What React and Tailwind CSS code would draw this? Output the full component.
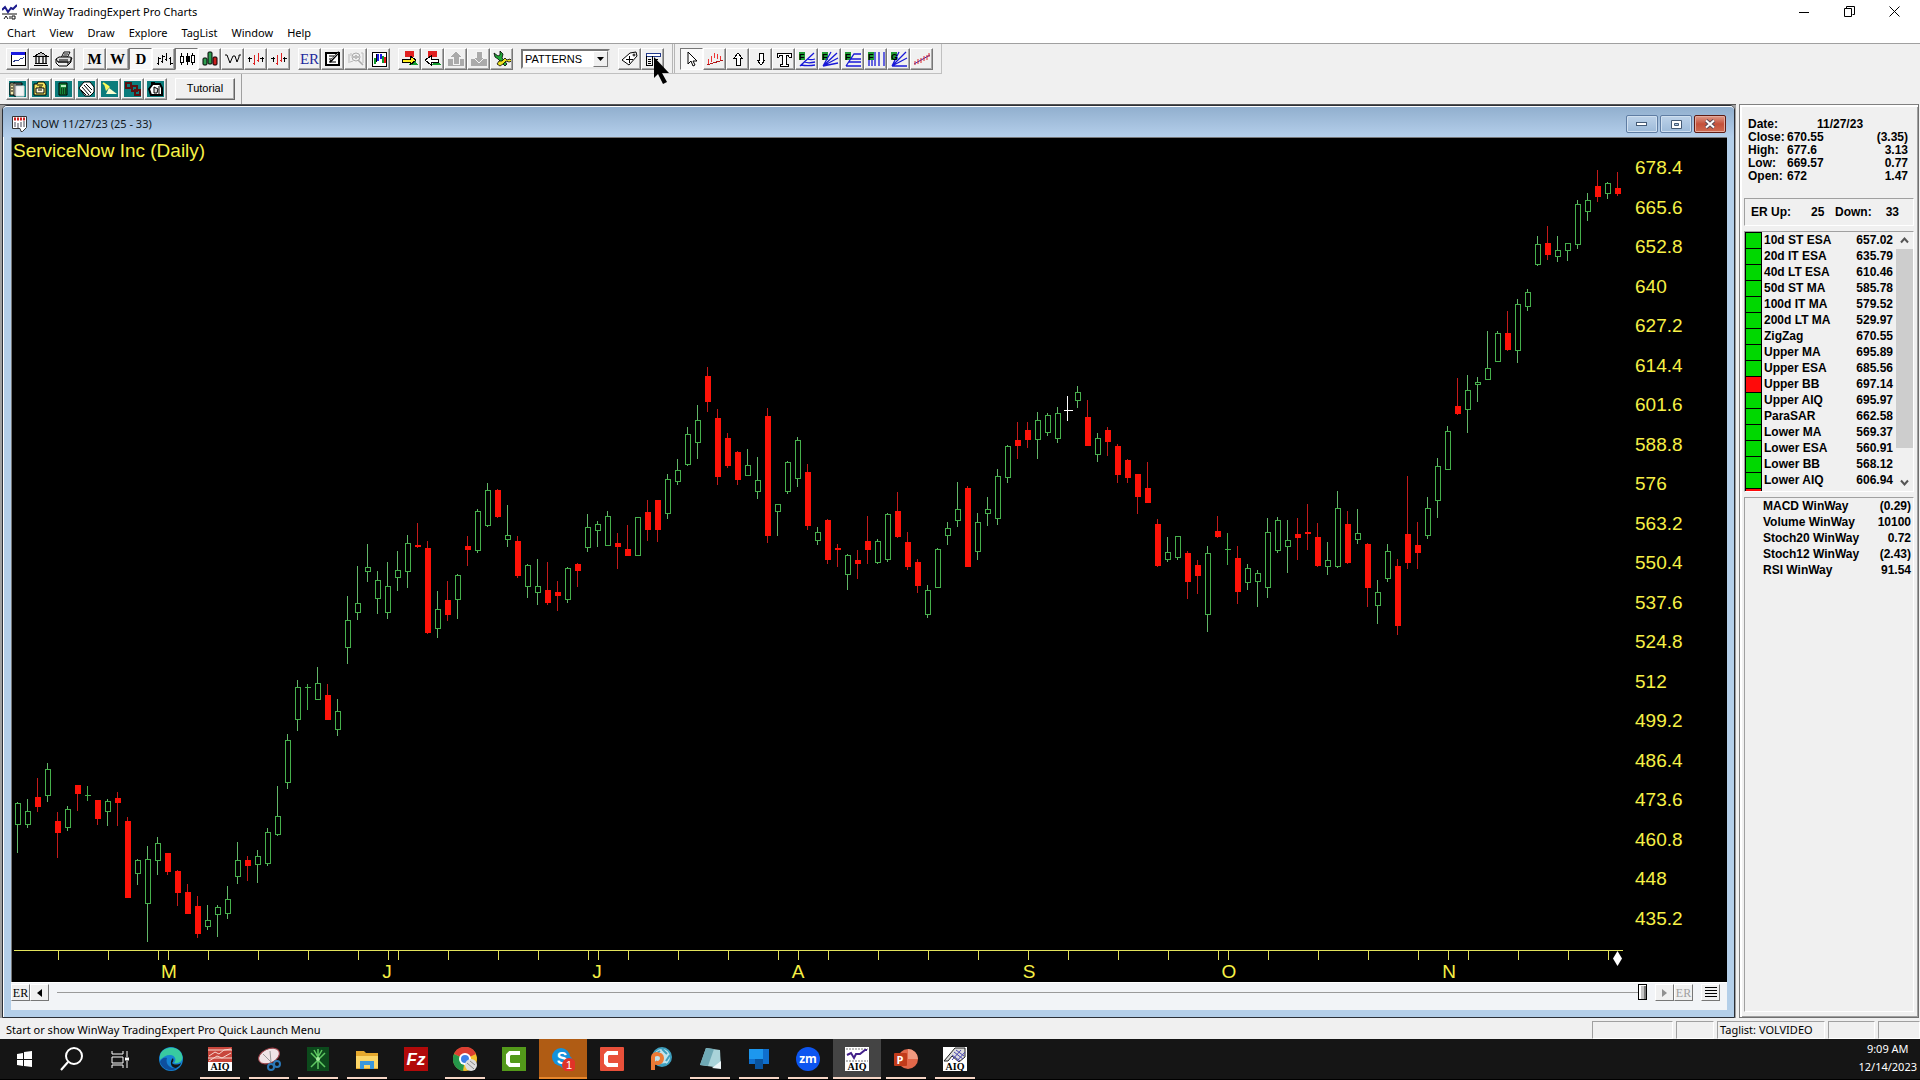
import React from 'react';

const MENU_ITEMS = ['Chart', 'View', 'Draw', 'Explore', 'TagList', 'Window', 'Help'];

const UI_FONT = "font-['Noto_Sans','Open_Sans',sans-serif]";
const SANS_FONT = "font-['Liberation_Sans',Arial,sans-serif]";

// [up?, high, body top, body bottom, low]
const CANDLES = [
    [1, 802, 803, 824, 853], [1, 799, 811, 824, 828], [0, 778, 797, 806, 812], [1, 763, 769, 795, 802],
    [0, 812, 821, 832, 858], [1, 806, 809, 827, 831], [0, 785, 785, 793, 811], [1, 786, 795, 795, 801],
    [0, 800, 800, 818, 825], [1, 799, 801, 811, 826], [0, 792, 798, 802, 826], [0, 817, 821, 897, 897],
    [1, 859, 860, 873, 885], [1, 846, 859, 903, 942], [1, 837, 843, 860, 875], [0, 853, 853, 871, 875],
    [0, 870, 871, 892, 906], [0, 884, 892, 913, 914], [0, 896, 906, 933, 938], [1, 905, 920, 926, 930],
    [1, 905, 907, 914, 937], [1, 886, 899, 913, 919], [1, 842, 860, 876, 884], [0, 856, 860, 865, 881],
    [1, 850, 856, 864, 883], [1, 828, 832, 863, 866], [1, 786, 816, 834, 836], [1, 734, 740, 782, 789],
    [1, 680, 687, 719, 731], [1, 684, 687, 687, 710], [1, 667, 683, 699, 699], [0, 684, 695, 719, 719],
    [1, 699, 711, 729, 736], [1, 596, 620, 647, 664], [1, 566, 603, 612, 620], [1, 544, 567, 571, 582],
    [1, 571, 580, 598, 614], [1, 562, 586, 612, 619], [1, 551, 570, 577, 591], [1, 535, 543, 571, 588],
    [0, 523, 545, 546, 548], [0, 541, 548, 632, 634], [1, 591, 609, 628, 638], [0, 581, 600, 614, 621],
    [1, 574, 575, 599, 619], [0, 536, 546, 549, 566], [1, 509, 511, 550, 553], [1, 483, 490, 525, 527],
    [0, 489, 490, 516, 518], [1, 505, 535, 539, 547], [0, 536, 541, 575, 578], [1, 564, 565, 586, 598],
    [1, 559, 586, 592, 605], [0, 562, 590, 602, 605], [0, 581, 592, 595, 611], [1, 567, 568, 599, 603],
    [0, 563, 564, 570, 587], [1, 514, 527, 547, 552], [1, 521, 524, 530, 547], [1, 511, 516, 545, 545],
    [0, 533, 543, 546, 569], [0, 525, 549, 555, 556], [1, 517, 517, 555, 555], [0, 500, 512, 529, 541],
    [0, 500, 500, 529, 542], [1, 474, 479, 513, 519], [1, 459, 470, 481, 485], [1, 427, 434, 464, 466],
    [1, 405, 420, 442, 459], [0, 367, 376, 401, 412], [0, 409, 418, 476, 485], [0, 433, 438, 465, 468],
    [0, 451, 452, 479, 485], [1, 449, 465, 475, 475], [1, 457, 480, 491, 499], [0, 408, 416, 535, 543],
    [1, 504, 504, 511, 536], [1, 461, 462, 491, 494], [1, 437, 440, 478, 487], [0, 464, 472, 525, 530],
    [1, 527, 532, 540, 545], [0, 519, 520, 559, 564], [0, 544, 548, 549, 567], [1, 554, 555, 574, 590],
    [0, 550, 560, 563, 579], [0, 516, 541, 549, 564], [1, 539, 541, 562, 564], [1, 513, 514, 559, 562],
    [0, 492, 511, 536, 538], [0, 532, 542, 566, 570], [0, 559, 562, 585, 593], [1, 585, 590, 614, 618],
    [1, 548, 549, 587, 587], [1, 522, 528, 535, 545], [1, 482, 509, 520, 527], [0, 486, 488, 566, 567],
    [1, 513, 522, 551, 560], [1, 497, 509, 513, 526], [1, 469, 476, 518, 525], [1, 445, 446, 477, 483],
    [0, 422, 440, 445, 459], [0, 422, 430, 439, 448], [1, 412, 420, 439, 459], [1, 413, 415, 432, 436],
    [1, 407, 413, 438, 443], null, [1, 386, 392, 400, 408], [0, 400, 417, 445, 446],
    [1, 433, 438, 454, 462], [0, 427, 430, 441, 456], [0, 444, 446, 474, 483], [0, 459, 460, 477, 483],
    [0, 474, 474, 496, 514], [0, 462, 488, 502, 503], [0, 519, 524, 565, 567], [1, 537, 552, 559, 562],
    [1, 536, 536, 557, 560], [0, 551, 553, 581, 599], [0, 560, 565, 575, 594], [1, 546, 553, 614, 632],
    [0, 516, 531, 536, 538], [1, 533, 549, 549, 565], [0, 546, 558, 591, 604], [1, 564, 568, 582, 590],
    [1, 570, 573, 581, 607], [1, 518, 532, 587, 598], [1, 517, 520, 550, 553], [1, 520, 540, 546, 573],
    [0, 518, 534, 537, 560], [0, 504, 532, 533, 550], [0, 523, 537, 565, 567], [1, 542, 560, 566, 575],
    [1, 491, 508, 566, 568], [0, 511, 524, 562, 564], [1, 509, 533, 539, 544], [0, 543, 544, 587, 607],
    [1, 580, 592, 605, 624], [1, 544, 551, 578, 582], [0, 559, 566, 625, 635], [0, 476, 534, 562, 569],
    [0, 522, 545, 552, 569], [1, 497, 508, 535, 539], [1, 458, 466, 500, 518], [1, 426, 431, 469, 470],
    [0, 378, 406, 413, 415], [1, 375, 390, 409, 433], [1, 377, 382, 384, 402], [1, 331, 368, 379, 379],
    [1, 331, 333, 361, 361], [0, 311, 333, 349, 351], [1, 299, 304, 350, 363], [1, 289, 292, 306, 311],
    [1, 236, 244, 264, 266], [0, 226, 243, 254, 260], [1, 236, 250, 256, 262], [1, 243, 243, 250, 261],
    [1, 200, 204, 244, 249], [1, 193, 200, 211, 221], [0, 170, 186, 196, 202], [1, 182, 183, 193, 199],
    [0, 172, 188, 193, 196],
];

const PRICE_LABELS = [
    '678.4', '665.6', '652.8', '640', '627.2', '614.4', '601.6', '588.8', '576', '563.2',
    '550.4', '537.6', '524.8', '512', '499.2', '486.4', '473.6', '460.8', '448', '435.2',
];

const WEEK_TICKS = [
    58, 108, 158, 168, 208, 258, 308, 358, 388, 398, 448, 498, 538, 588, 598, 628, 678, 728, 778, 798,
    828, 878, 928, 978, 1028, 1068, 1118, 1168, 1218, 1228, 1268, 1318, 1368, 1418, 1448, 1468, 1518, 1568, 1608,
];

const MONTHS = [['M', 169], ['J', 387], ['J', 597], ['A', 798], ['S', 1029], ['O', 1229], ['N', 1449]];

const QUOTES = [
    ['Close:', '670.55', '(3.35)'],
    ['High:', '677.6', '3.13'],
    ['Low:', '669.57', '0.77'],
    ['Open:', '672', '1.47'],
];

const INDICATORS = [
    ['10d ST ESA', '657.02'], ['20d IT ESA', '635.79'], ['40d LT ESA', '610.46'], ['50d ST MA', '585.78'],
    ['100d IT MA', '579.52'], ['200d LT MA', '529.97'], ['ZigZag', '670.55'], ['Upper MA', '695.89'],
    ['Upper ESA', '685.56'], ['Upper BB', '697.14', true], ['Upper AIQ', '695.97'], ['ParaSAR', '662.58'],
    ['Lower MA', '569.37'], ['Lower ESA', '560.91'], ['Lower BB', '568.12'], ['Lower AIQ', '606.94'],
    ['St Max', '710.44', true],
];

const WINWAY = [
    ['MACD WinWay', '(0.29)'],
    ['Volume WinWay', '10100'],
    ['Stoch20 WinWay', '0.72'],
    ['Stoch12 WinWay', '(2.43)'],
    ['RSI WinWay', '91.54'],
];

const Icon = ({ children, crisp = true }) => (
    <svg width="18" height="16" viewBox="0 0 18 16" fill="none" stroke="#000" shapeRendering={crisp ? 'crispEdges' : 'auto'}>
        {children}
    </svg>
);

const ToolButton = ({ label, pressed, children }) => (
    <button
        aria-label={label}
        className={`flex h-[22px] w-[23px] items-center justify-center border ${
            pressed
                ? 'border-t-[#777] border-l-[#777] border-r-white border-b-white bg-[#f9f9f9] pt-px pl-px'
                : 'border-t-white border-l-white border-r-[#777] border-b-[#777] bg-[#f0f0f0] shadow-[inset_-1px_-1px_0_#a9a9a9]'
        }`}
    >
        {children}
    </button>
);

const Serif = ({ children }) => (
    <span className="font-['Liberation_Serif',serif] text-[15px] leading-4 font-bold text-black">{children}</span>
);

/* Toolbar glyphs */
const ChartIcon = () => (
    <Icon>
        <rect x="2" y="1" width="14" height="13" fill="#fff" />
        <path d="M2 2.5h14" stroke="#1a1ae0" strokeWidth="3" />
        <path d="M4 11l3-2 2 1 3-3 1 1 2-2" stroke="#2a3a8a" />
    </Icon>
);

const BankIcon = () => (
    <Icon>
        <path d="M2 5.500L9 1.500l7 4zM2 14.500h14M3 12.500h12" fill="#bbb" />
        <path d="M4 6v6M7 6v6M11 6v6M14 6v6" stroke="#555" strokeWidth="2" />
    </Icon>
);

const PrinterIcon = () => (
    <Icon crisp={false}>
        <path d="M6 7l3-6h6l-3 6" fill="#fff" />
        <path d="M1 8l3-2h11l2 1-2 4H3z" fill="#ddd" />
        <path d="M1 8v4l3 3h8l4-4V7M3 11h10v3M4 9h9" />
        <path d="M9 3h4M8 5h4" />
    </Icon>
);

const BarsIcon = () => (
    <Icon>
        <path d="M3.500 6v8M1.500 12.500h2M3.500 7.500h2M7.500 4v8M5.500 10.500h2M7.500 5.500h2M11.500 2v8M9.500 8.500h2M15.500 6v8M13.500 7.500h2M15.500 12.500h2" />
    </Icon>
);

const CandlesIcon = () => (
    <Icon>
        <path d="M3.500 2v12M9.500 2v12M14.500 2v12" />
        <rect x="2" y="5" width="3" height="6" fill="#fff" />
        <rect x="8" y="5" width="3" height="5" fill="#000" />
        <rect x="13" y="4" width="3" height="7" fill="#fff" />
    </Icon>
);

const VolumeIcon = () => (
    <Icon crisp={false}>
        <rect x="2" y="7" width="4" height="7" rx="1" fill="#2e9d50" />
        <rect x="7" y="1" width="4" height="12" rx="1" fill="#2e9d50" />
        <rect x="12" y="6" width="4" height="8" rx="1" fill="#c81e1e" />
    </Icon>
);

const LineIcon = () => (
    <Icon crisp={false}>
        <path d="M1 4h2l3 8 3-7 2 0 2 6 2-5v-2h2" />
    </Icon>
);

const SpreadIcon = ({ inward }) => (
    <Icon>
        <path d="M7.500 4v10M5.500 12.500h2M11.500 2v9M9.500 9.500h2" stroke="#d22" />
        {inward ? (
            <path d="M1 7.500h4M13 7.500h4M3.500 5.500v5M14.500 5.500v5" />
        ) : (
            <path d="M1 7.500h4M13 7.500h4M2.500 5.500v5M15.500 5.500v5" />
        )}
    </Icon>
);

const NoteIcon = () => (
    <Icon crisp={false}>
        <rect x="2" y="2" width="13" height="12" fill="#fff" strokeWidth="2" />
        <path d="M5 5h5M5 8h3M5 11h7" />
        <path d="M6 11L15 1" strokeWidth="2" />
        <path d="M7 9L14 2" stroke="#fff" strokeWidth="0.6" />
    </Icon>
);

const ZoomIcon = () => (
    <Icon crisp={false}>
        <path d="M2 3v9M4 2v3M3 11l3-1M14 2h2v10" stroke="#bbb" />
        <circle cx="9" cy="6" r="4" stroke="#aaa" />
        <path d="M7 7V5M9 8V4M11 7V5M11 9l5 5" stroke="#aaa" strokeWidth="1.500" />
    </Icon>
);

const ColorBarsIcon = () => (
    <Icon>
        <rect x="2" y="1" width="14" height="14" fill="#fff" />
        <path d="M4.500 7v6M12.500 5v7" stroke="#0a9a2a" strokeWidth="2" />
        <path d="M8 3v7M11 3v5" stroke="#1a1ae0" strokeWidth="2" />
        <path d="M6.500 3v8" strokeWidth="1" />
        <path d="M14.500 6v6" stroke="#e01515" strokeWidth="2" />
    </Icon>
);

const TagIcon = ({ back }) => (
    <Icon>
        <path d="M4 0h9v6H4z" fill="#e02020" stroke="none" />
        <path d="M13 8l4 6H8z" fill="#149a30" stroke="none" />
        {back ? (
            <path d="M1 9l6-4v3h7v3H7v3z" fill="#fff" />
        ) : (
            <path d="M15 9L9 5v3H1v3h8v3z" fill="#ffef20" />
        )}
    </Icon>
);

const GreyArrowIcon = ({ down }) => (
    <Icon>
        <path d="M1 8h16v7H1z" fill="#aaa" stroke="none" />
        {down ? (
            <path d="M6 0h6v6h3l-6 6-6-6h3z" fill="#aaa" stroke="#f4f4f4" />
        ) : (
            <path d="M9 0l6 6h-3v7H6V6H3z" fill="#aaa" stroke="#f4f4f4" />
        )}
    </Icon>
);

const WrenchIcon = () => (
    <Icon crisp={false}>
        <path d="M1 2l1 4 3 2 7 7 2-2-5-6 1-4-3-3v4L5 5z" fill="#20a838" strokeWidth="0.8" />
        <path d="M17 8l-3 1-2-2-3 3-3 0-2 3 3 2 3-2 3-3 3 1 3-1z" fill="#ece020" strokeWidth="0.8" />
    </Icon>
);

const LabelIcon = () => (
    <Icon crisp={false}>
        <path d="M1 9l8-7 6-1 1 4-8 9zM5 8.500h7M8.500 5v7" fill="#fff" />
        <circle cx="13" cy="4" r="1" />
    </Icon>
);

const QuickIcon = () => (
    <Icon>
        <rect x="2" y="2" width="14" height="3" fill="#fff" stroke="#223a8c" />
        <path d="M2.500 5v9h6V5M4 8h3M4 10h3M4 12h3" />
        <path d="M11 8h3" />
    </Icon>
);

const PointerIcon = () => (
    <Icon crisp={false}>
        <path d="M5 1v12l3-3 2 5 2-1-2-4h4z" fill="#fff" />
    </Icon>
);

const TrendIcon = () => (
    <Icon>
        <path d="M1 14L17 9" stroke="#b01515" />
        <path d="M2.500 8v5M5.500 5v6M8.500 2v5M11.500 3v5M14.500 5v4" stroke="#e33" />
    </Icon>
);

const ArrowIcon = ({ down }) => (
    <Icon>
        {down ? (
            <path d="M7 2h4v7h2l-4 5-4-5h2z" fill="#fff" />
        ) : (
            <path d="M7 14h4V7h2L9 2 5 7h2z" fill="#fff" />
        )}
    </Icon>
);

const TextIcon = () => (
    <Icon>
        <path d="M2 2h14v4h-2l-1-2h-2v9h2v2H5v-2h2V4H5L4 6H2z" fill="#fff" />
    </Icon>
);

const FanIcon = ({ letter, lines }) => (
    <Icon crisp={false}>
        <rect x="1" y="1" width="6" height="8" fill="#1f9a35" stroke="none" />
        <path d={lines} stroke="#1818d8" strokeWidth="1.300" />
        <text x="1" y="9" fill="#000" stroke="none" fontSize="9" fontWeight="bold" fontFamily="Liberation Sans, sans-serif">
            {letter}
        </text>
    </Icon>
);

const RegressionIcon = () => (
    <Icon crisp={false}>
        <path d="M1 13L17 4" stroke="#2020c8" />
        <path d="M2 14v-4M5 13V8M8 12V7M11 10V5M14 9V4M16 6V2" stroke="#e02828" />
    </Icon>
);

/* Second toolbar: teal tiles */
const Tile = ({ children }) => (
    <svg width="17" height="16" viewBox="0 0 17 16" stroke="#000" fill="none">
        <rect width="17" height="16" fill="#0b7c7c" stroke="none" />
        {children}
    </svg>
);

const TOOL_TILES = [
    ['Reports', <g key="a"><path d="M1 2h5v12H1z" fill="#f6ecb0" /><path d="M5 2h8v2H7v11H5z" fill="#fff" /><path d="M7 5h8v10H7z" fill="#f4f4f4" stroke="#ddd" /><path d="M2 4h2M2 7h2M2 10h2M6 3h7" /></g>],
    ['Data retrieval', <g key="b"><path d="M2 3h3l1-2h6l2 3v10H2z" fill="#f4e460" /><path d="M5 4h6M4 7h8v5H4z" fill="#fffbd8" /><path d="M6 9h4M7 6h3" /></g>],
    ['Calculator', <g key="c"><path d="M4 2h8v12H4z" fill="#18853a" /><path d="M6 5h5" stroke="#b5f0c0" strokeWidth="2" /><path d="M6 8h5M6 10h5M6 12h5" strokeDasharray="1 1" /></g>],
    ['Matching', <g key="d"><path d="M1 7l5-6h6l4 5v5l-4 4H7z" fill="#fff" /><path d="M4 6l7 8M6 4l7 8M8 3l6 6M3 9l5 5" /></g>],
    ['Alert', <g key="e"><path d="M3 3l6 3-4 4z" fill="#f5f060" stroke="none" /><path d="M8 7l8 6H5z" fill="#fbffd0" stroke="none" /><path d="M2 2l6 4" stroke="#ff5" strokeWidth="2" /></g>],
    ['Expert design', <g key="f"><path d="M2 2h5v5H2zM8 5h5v5H8zM11 9h5v5h-5z" stroke="#5a1010" strokeWidth="2" /></g>],
    ['Portfolio', <g key="g"><path d="M2 8l3-4V2h2v1h6l2 4v7H4z" fill="#fff" strokeWidth="2" /><path d="M7 6l4 2-1 4H7zM12 5v8" fill="#ddd" /></g>],
];

const WindowTitle = () => (
    <header className={`bg-white text-[11px] text-black ${UI_FONT}`}>
        <div className="flex h-6 items-center gap-[6px] pl-[2px]">
            <svg width="15" height="16" viewBox="0 0 15 16" fill="none">
                <path d="M0 6l3-3 3 5 3-4 2 1 4-4" stroke="#1a1a8c" strokeWidth="2" />
                <path d="M0 10h15M2 15l2-3 2 3M8 12v3M10 12h3v3h-3z" stroke="#111" />
            </svg>
            <h1 className="flex-1">WinWay TradingExpert Pro Charts</h1>
            <div className="flex items-center gap-[11px] pr-[9px] pb-px">
                <button aria-label="Minimize" className="flex h-5 w-[34px] items-center justify-center">
                    <svg width="10" height="10"><path d="M0 5.500h10" stroke="#000" /></svg>
                </button>
                <button aria-label="Restore" className="flex h-5 w-[34px] items-center justify-center">
                    <svg width="11" height="11" fill="none" stroke="#000"><path d="M.5 2.500h7v8h-7zM2.500 2.500v-2h8v8h-2" /></svg>
                </button>
                <button aria-label="Close" className="flex h-5 w-[34px] items-center justify-center">
                    <svg width="11" height="11" fill="none" stroke="#000"><path d="M.5 .5l10 10M10.500 .5l-10 10" /></svg>
                </button>
            </div>
        </div>
        <nav className="flex h-[19px] items-center gap-[14px] pb-px pl-[7px]">
            {MENU_ITEMS.map((item) => (
                <button key={item}>{item}</button>
            ))}
        </nav>
    </header>
);

const Toolbars = () => (
    <div className="border-t border-[#a0a0a0] bg-[#f0f0f0]">
        <div className="flex h-[30px] w-[942px] items-center gap-2 border-r border-b border-[#c0c0c0] pl-[6px]">
            <div className="flex">
                <ToolButton label="Chart"><ChartIcon /></ToolButton>
                <ToolButton label="Fundamentals"><BankIcon /></ToolButton>
                <ToolButton label="Print"><PrinterIcon /></ToolButton>
            </div>
            <div className="flex">
                <ToolButton label="Monthly"><Serif>M</Serif></ToolButton>
                <ToolButton label="Weekly"><Serif>W</Serif></ToolButton>
                <ToolButton label="Daily" pressed><Serif>D</Serif></ToolButton>
                <ToolButton label="Bar chart"><BarsIcon /></ToolButton>
                <ToolButton label="Candlestick" pressed><CandlesIcon /></ToolButton>
                <ToolButton label="Equivolume"><VolumeIcon /></ToolButton>
                <ToolButton label="Line chart"><LineIcon /></ToolButton>
                <ToolButton label="Expand"><SpreadIcon /></ToolButton>
                <ToolButton label="Contract"><SpreadIcon inward /></ToolButton>
            </div>
            <div className="flex">
                <ToolButton label="Expert Ratings">
                    <span className="font-['Liberation_Serif',serif] text-[15px] leading-4 text-[#1c2a9c]">ER</span>
                </ToolButton>
                <ToolButton label="Notes"><NoteIcon /></ToolButton>
                <ToolButton label="Zoom"><ZoomIcon /></ToolButton>
                <ToolButton label="Color study"><ColorBarsIcon /></ToolButton>
            </div>
            <div className="flex">
                <ToolButton label="Next"><TagIcon /></ToolButton>
                <ToolButton label="Previous"><TagIcon back /></ToolButton>
                <ToolButton label="Up"><GreyArrowIcon /></ToolButton>
                <ToolButton label="Down"><GreyArrowIcon down /></ToolButton>
                <ToolButton label="Settings"><WrenchIcon /></ToolButton>
            </div>
            <div className="relative flex">
                <select
                    aria-label="Tag list"
                    className={`h-5 w-[89px] appearance-none border-2 border-t-[#777] border-l-[#777] border-r-[#e8e8e8] border-b-[#e8e8e8] bg-white pl-[2px] text-[11px] leading-4 text-black ${SANS_FONT}`}
                >
                    <option>PATTERNS</option>
                </select>
                <span className="pointer-events-none absolute top-[2px] right-[2px] flex h-4 w-[15px] items-center justify-center border border-t-white border-l-white border-r-[#777] border-b-[#777] bg-[#f0f0f0]">
                    <svg width="7" height="4"><path d="M0 0h7L3.500 4z" /></svg>
                </span>
            </div>
            <div className="flex">
                <ToolButton label="Tag"><LabelIcon /></ToolButton>
                <div className="relative">
                    <ToolButton label="Quick Launch Menu"><QuickIcon /></ToolButton>
                    <svg className="absolute top-[9px] left-[13px] z-10" width="16" height="27">
                        <path d="M0 0v21l4-4 5 10 4-2-5-9h7z" />
                    </svg>
                </div>
            </div>
            <div className="flex h-full items-center gap-[5px]">
                <div className="h-full w-[3px] border-x border-[#b5b5b5]" />
                <div className="flex">
                    <ToolButton label="Select" pressed><PointerIcon /></ToolButton>
                    <ToolButton label="Trendline"><TrendIcon /></ToolButton>
                    <ToolButton label="Up arrow"><ArrowIcon /></ToolButton>
                    <ToolButton label="Down arrow"><ArrowIcon down /></ToolButton>
                    <ToolButton label="Text"><TextIcon /></ToolButton>
                    <ToolButton label="Fibonacci arcs"><FanIcon letter="F" lines="M2 15L16 2M3 14c5 1 9 1 14 0M6 11c3 1 7 1 11 0M9 8c3 1 5 1 8 0" /></ToolButton>
                    <ToolButton label="Fibonacci fan"><FanIcon letter="F" lines="M2 15L10 1M2 15L16 2M2 15L17 7M2 15L17 12" /></ToolButton>
                    <ToolButton label="Fibonacci retracement"><FanIcon letter="F" lines="M2 15L10 3h7M7 8h10M5 11h12M2 15h15" /></ToolButton>
                    <ToolButton label="Fibonacci time zones"><FanIcon letter="F" lines="M2 9v6M5 9v6M8 1v14M12 1v14M17 1v14" /></ToolButton>
                    <ToolButton label="Gann"><FanIcon letter="G" lines="M2 15L16 1M2 15L17 7M2 15h15M2 15L9 1" /></ToolButton>
                    <ToolButton label="Regression"><RegressionIcon /></ToolButton>
                </div>
            </div>
        </div>
        <div className="flex h-[30px] w-[242px] items-center gap-2 border-r border-[#a0a0a0] pb-px pl-[6px]">
            <div className="flex">
                {TOOL_TILES.map(([label, glyph]) => (
                    <ToolButton key={label} label={label}><Tile>{glyph}</Tile></ToolButton>
                ))}
            </div>
            <button
                className={`h-[22px] w-[60px] border border-t-white border-l-white border-r-[#666] border-b-[#666] text-[11px] text-black shadow-[inset_-1px_-1px_0_#a9a9a9] ${SANS_FONT}`}
            >
                Tutorial
            </button>
        </div>
    </div>
);

const Candle = ({ x, data }) => {
    const [up, high, top, bottom, low] = data;
    // a day that closes where it opened has no body, only a cross bar
    if (top === bottom) {
        return <path d={`M${x} ${high}V${low}M${x - 2.5} ${top + 0.5}h6`} stroke={up ? '#46b04c' : '#ff1208'} />;
    }
    if (up) {
        return (
            <g stroke="#46b04c">
                <path d={`M${x} ${high}V${top}M${x} ${bottom}V${low}`} stroke="#62b868" />
                <rect x={x - 2} y={top + 0.5} width="5" height={bottom - top} />
            </g>
        );
    }
    return (
        <g>
            <path d={`M${x} ${high}V${low}`} stroke="#c41a1a" />
            <rect x={x - 2.5} y={top} width="6" height={bottom - top + 1} fill="#ff1208" />
        </g>
    );
};

const PriceChart = () => (
    <svg className={`block min-h-0 w-full flex-1 bg-black ${SANS_FONT}`} fill="none" fontSize="19" role="img" aria-label="ServiceNow daily candlestick chart">
        <g transform="translate(-12 -138)">
            <text x="13" y="157" fill="#f7f046">ServiceNow Inc (Daily)</text>
            {CANDLES.map((candle, i) => candle && <Candle key={i} x={17.5 + i * 10} data={candle} />)}
            <path d="M1067.500 396v25M1064 410.500h9" stroke="#fff" />
            <path d={`M14 950.500H1623${WEEK_TICKS.map((x) => `M${x + 0.5} 950v10`).join('')}`} stroke="#e4e45c" />
            <path d="M1617.500 951l4.500 7.500-4.500 7.500-4.500-7.500z" fill="#fff" />
            {PRICE_LABELS.map((label, i) => (
                <text key={label} x="1635" y={Math.round(174 + i * 39.5)} fill="#f7f046">{label}</text>
            ))}
            {MONTHS.map(([letter, x]) => (
                <text key={x} x={x} y="978" textAnchor="middle" fill="#f7f046">{letter}</text>
            ))}
        </g>
    </svg>
);

const SmallButton = ({ label, children }) => (
    <button
        aria-label={label}
        className="flex h-[17px] w-[19px] items-center justify-center border border-t-white border-l-white border-r-[#777] border-b-[#777] bg-[#f0f0f0] font-['Liberation_Serif',serif] text-[12px] text-black"
    >
        {children}
    </button>
);

const ChartWindow = () => (
    <section className="flex flex-1 flex-col rounded-t-[5px] border border-[#2b2f36] bg-[#b4cfe9]">
        <div className={`flex h-[31px] items-center gap-[5px] rounded-t-[4px] border-t border-white bg-linear-to-b from-[#91afce] to-[#b5cfeb] pt-[4px] pr-2 pl-[9px] text-[11px] text-[#101820] ${UI_FONT}`}>
            <svg width="15" height="16" viewBox="0 0 15 16" fill="none">
                <path d="M.5 .5h14v11l-4 4H9l-1-3H.5z" fill="#fff" stroke="#333" />
                <path d="M2 3h11" stroke="#c22" strokeWidth="3" strokeDasharray="2 1" />
                <path d="M3 6v5M6 7v5M9 6v5M12 5v6" stroke="#445" />
            </svg>
            <h2 className="flex-1">NOW 11/27/23 (25 - 33)</h2>
            <div className="flex gap-[2px]">
                <button aria-label="Minimize chart" className="flex h-[18px] w-8 items-center justify-center rounded-[2px] border border-[#5f7da3] bg-linear-to-b from-[#bdd2e9] to-[#9dbad9] shadow-[inset_0_0_0_1px_#d0e0f0]">
                    <svg width="12" height="6"><rect x=".5" y="1.500" width="10" height="3" fill="#fff" stroke="#445a75" /></svg>
                </button>
                <button aria-label="Maximize chart" className="flex h-[18px] w-8 items-center justify-center rounded-[2px] border border-[#5f7da3] bg-linear-to-b from-[#bdd2e9] to-[#9dbad9] shadow-[inset_0_0_0_1px_#d0e0f0]">
                    <svg width="11" height="9"><path d="M.5 .5h10v8H.5zM3.500 3.500v2h4v-2z" fill="#fff" fillRule="evenodd" stroke="#445a75" /></svg>
                </button>
                <button aria-label="Close chart" className="flex h-[18px] w-8 items-center justify-center rounded-[2px] border border-[#5e1c14] bg-linear-to-b from-[#dd9a8a] via-[#c4503a] to-[#cf6a50] shadow-[inset_0_0_0_1px_#e5aa9c]">
                    <svg width="12" height="10" fill="none">
                        <path d="M2 1.500l8 7M10 1.500l-8 7" stroke="#5a4a55" strokeWidth="4" />
                        <path d="M2 1.500l8 7M10 1.500l-8 7" stroke="#fff" strokeWidth="2" />
                    </svg>
                </button>
            </div>
        </div>
        <div className="flex min-h-0 flex-1 flex-col border-l border-white px-[7px] pb-[7px]">
            <div className="flex min-h-0 flex-1 flex-col border-t border-l border-[#777] bg-black">
                <PriceChart />
            </div>
            <div className="flex h-7 items-start border-t border-white bg-[#f2f4f7] pt-px pr-[7px]">
                <SmallButton label="Previous rating">ER</SmallButton>
                <SmallButton label="Step back">
                    <svg width="5" height="8"><path d="M5 0v8L0 4z" /></svg>
                </SmallButton>
                <input
                    type="range"
                    aria-label="Chart position"
                    defaultValue="100"
                    className="mx-2 h-4 flex-1 appearance-none bg-transparent [&::-webkit-slider-runnable-track]:h-px [&::-webkit-slider-runnable-track]:bg-[#9a9a9a] [&::-webkit-slider-thumb]:-mt-2 [&::-webkit-slider-thumb]:h-4 [&::-webkit-slider-thumb]:w-[9px] [&::-webkit-slider-thumb]:appearance-none [&::-webkit-slider-thumb]:border [&::-webkit-slider-thumb]:border-black [&::-webkit-slider-thumb]:bg-[#c4c4c4] [&::-webkit-slider-thumb]:shadow-[inset_2px_1px_0_#fff,inset_-2px_0_0_#777]"
                />
                <SmallButton label="Step forward">
                    <svg width="5" height="8" fill="#909090"><path d="M0 0v8l5-4z" /></svg>
                </SmallButton>
                <SmallButton label="Next rating"><span className="text-[#a0a0a0]">ER</span></SmallButton>
                <div className="w-2" />
                <SmallButton label="List">
                    <svg width="12" height="11" stroke="#000"><path d="M0 .5h12M0 3.500h12M0 6.500h12M0 9.500h12" /></svg>
                </SmallButton>
            </div>
        </div>
    </section>
);

const ScrollArrow = ({ down }) => (
    <svg width="17" height="17" viewBox="0 0 17 17" fill="none" stroke="#555" strokeWidth="2">
        <path d={down ? 'M5 6.500l3.500 4 3.500-4' : 'M5 10.500l3.500-4 3.500 4'} />
    </svg>
);

const Sidebar = () => (
    <aside
        className={`flex w-[180px] flex-col border border-t-[#808080] border-l-[#808080] border-r-[#707070] border-b-[#707070] bg-[#f0f0f0] px-1 pt-[13px] pb-[5px] text-[12px] font-bold text-black shadow-[inset_2px_2px_0_#fff,inset_-1px_-1px_0_#a0a0a0] ${SANS_FONT}`}
    >
        <table className="ml-1 w-[160px] leading-[13px]">
            <tbody>
                <tr>
                    <th className="w-[39px] p-0 text-left">Date:</th>
                    <td className="p-0 pl-[30px]" colSpan="2">11/27/23</td>
                </tr>
                {QUOTES.map(([label, price, change]) => (
                    <tr key={label}>
                        <th className="p-0 text-left">{label}</th>
                        <td className="p-0">{price}</td>
                        <td className="p-0 text-right">{change}</td>
                    </tr>
                ))}
            </tbody>
        </table>
        <div className="mt-[15px] flex h-7 items-center border border-t-[#a0a0a0] border-l-[#a0a0a0] border-r-white border-b-white pr-[14px] pl-[6px]">
            <span className="w-[60px]">ER Up:</span>
            <span className="w-6">25</span>
            <span className="flex-1">Down:</span>
            <span>33</span>
        </div>
        <div className="mt-[5px] flex h-[261px] overflow-hidden border border-t-[#a0a0a0] border-l-[#a0a0a0] border-r-white border-b-white">
            <div className="flex-1 overflow-hidden">
                <table className="w-full leading-4">
                    <tbody>
                        {INDICATORS.map(([label, value, red]) => (
                            <tr key={label} className="h-4">
                                <td className={`w-4 border border-black p-0 ${red ? 'bg-[#ff0a0a]' : 'bg-[#00d800]'}`} />
                                <td className="p-0 pl-[2px]"><div className="h-4 leading-[15px]">{label}</div></td>
                                <td className="p-0 pr-[3px] text-right"><div className="h-4 leading-[15px]">{value}</div></td>
                            </tr>
                        ))}
                    </tbody>
                </table>
            </div>
            <div className="flex w-[17px] flex-col justify-between">
                <ScrollArrow />
                <div className="mb-[26px] flex-1 bg-[#cdcdcd]" />
                <ScrollArrow down />
            </div>
        </div>
        <div className="mt-[5px] flex-1 border border-t-[#a0a0a0] border-l-[#a0a0a0] border-r-white border-b-white pl-[18px]">
            <table className="w-[148px] leading-4">
                <tbody>
                    {WINWAY.map(([label, value]) => (
                        <tr key={label}>
                            <td className="p-0">{label}</td>
                            <td className="p-0 text-right">{value}</td>
                        </tr>
                    ))}
                </tbody>
            </table>
        </div>
    </aside>
);

const StatusBar = () => (
    <footer className={`flex h-5 items-stretch gap-[3px] bg-[#f0f0f0] pt-[2px] pl-[6px] text-[11px] leading-[18px] text-black ${UI_FONT}`}>
        <span className="flex-1">Start or show WinWay TradingExpert Pro Quick Launch Menu</span>
        <span className="w-[81px] border border-t-[#a0a0a0] border-l-[#a0a0a0] border-r-white border-b-white" />
        <span className="w-[38px] border border-t-[#a0a0a0] border-l-[#a0a0a0] border-r-white border-b-white" />
        <span className="w-[108px] border border-t-[#a0a0a0] border-l-[#a0a0a0] border-r-white border-b-white pl-[2px] leading-4">Taglist: VOLVIDEO</span>
        <span className="w-[47px] border border-t-[#a0a0a0] border-l-[#a0a0a0] border-r-white border-b-white" />
        <span className="w-[42px] border border-t-[#a0a0a0] border-l-[#a0a0a0] border-r-white border-b-white" />
    </footer>
);

const TaskIcon = ({ label, running, active, alert, children }) => (
    <button
        aria-label={label}
        className={`flex h-full w-12 flex-col items-center justify-between pt-2 ${active ? 'bg-[#444]' : ''} ${alert ? 'bg-[#b05c14]' : ''}`}
    >
        <svg width="24" height="24" viewBox="0 0 24 24" fill="none">{children}</svg>
        <span className={`h-[2px] ${active || alert ? 'w-full' : 'w-10'} ${alert ? 'bg-[#e8872c]' : ''} ${running ? 'bg-[#f6d6c6]' : ''}`} />
    </button>
);

const AiqText = () => (
    <g>
        <rect y="15" width="24" height="9" fill="#fff" />
        <text x="12" y="23" textAnchor="middle" fontSize="10" fontWeight="bold" fill="#000" fontFamily="Liberation Serif, serif">AIQ</text>
    </g>
);

const Taskbar = () => (
    <div className="flex h-[41px] items-stretch border-b border-black bg-[#151515]">
        <div className="flex">
            <TaskIcon label="Start">
                <path d="M5 7l6-1v6H5zM12 5l8-1v8h-8zM5 13h6v6l-6-1zM12 13h8v7l-8-1z" fill="#fff" />
            </TaskIcon>
            <TaskIcon label="Search">
                <circle cx="14" cy="9" r="8" stroke="#fff" strokeWidth="2" />
                <path d="M8 15l-7 8" stroke="#fff" strokeWidth="2" />
            </TaskIcon>
            <TaskIcon label="Task view">
                <path d="M4 4v3h11V4M4 10h11v6H4zM4 21v-3h11v3M19 4v6M19 14v7" stroke="#fff" />
                <path d="M17 12h4" stroke="#fff" strokeWidth="3" />
            </TaskIcon>
        </div>
        <div className="ml-[3px] flex flex-1 gap-px">
            <TaskIcon label="Edge">
                <circle cx="12" cy="12" r="12" fill="#1583d2" />
                <path d="M1 8C4-1 20-2 23 8c2 6-3 9-8 8 3-3 1-8-4-8-4 0-7 2-10 5z" fill="#38cba0" />
                <path d="M8 11c-2 6 3 11 10 10-6 5-15 1-17-6 1-3 4-5 7-4z" fill="#0e4f9e" />
                <path d="M14 11c1 2 0 4-1 5 2 2 6 2 9 0-1 3-3 4-5 5-5 0-7-6-3-10z" fill="#151515" />
            </TaskIcon>
            <TaskIcon label="AIQ data" running>
                <rect width="24" height="24" fill="#fff" />
                <rect width="24" height="15" fill="#c8463c" />
                <path d="M0 3h24M0 11h24M1 9l6-4 4 2 5-4 7-1M1 14l8-5 5 2 9-5" stroke="#f7d8d0" />
                <AiqText />
            </TaskIcon>
            <TaskIcon label="Snipping tool" running>
                <ellipse cx="12" cy="9" rx="11" ry="7" transform="rotate(-25 12 9)" fill="#efe4e6" stroke="#9c4048" />
                <path d="M13 4l1 11M6 7l8 8" stroke="#999" />
                <circle cx="14" cy="20" r="3" stroke="#2b78b8" strokeWidth="2" />
                <circle cx="20" cy="17" r="3" stroke="#2b78b8" strokeWidth="2" />
            </TaskIcon>
            <TaskIcon label="Virus scan" running>
                <rect x="1" width="22" height="24" fill="#0c4a1c" />
                <path d="M12 2v20M5 6l14 14M19 6L5 20M8 3l4 7 4-7" stroke="#5fc862" strokeWidth="1.500" />
                <circle cx="12" cy="12" r="2" fill="#a4e99c" />
            </TaskIcon>
            <TaskIcon label="File Explorer" running>
                <path d="M1 4h8l2 2h12v16H1z" fill="#e6a92e" />
                <path d="M1 9h22v12H1z" fill="#fcd667" />
                <path d="M5 14h14v8h-4v-4H9v4H5z" fill="#3b97dc" />
            </TaskIcon>
            <TaskIcon label="FileZilla">
                <rect width="24" height="24" fill="#b20a0a" />
                <text x="12" y="18" textAnchor="middle" fontSize="17" fontWeight="bold" fontStyle="italic" fill="#fff" fontFamily="Liberation Sans, sans-serif">Fz</text>
            </TaskIcon>
            <TaskIcon label="Chrome" running>
                <circle cx="12" cy="12" r="12" fill="#f5c02c" />
                <path d="M12 12L1 7A12 12 0 0 1 23 7z" fill="#dc3e32" />
                <path d="M12 12L1 7a12 12 0 0 0 9 17z" fill="#25964a" />
                <circle cx="12" cy="12" r="6" fill="#fff" />
                <circle cx="12" cy="12" r="4" fill="#3f80e8" />
                <circle cx="18" cy="18" r="6" fill="#ddd" />
                <path d="M14 16l7 6M17 14l5 4" stroke="#888" />
            </TaskIcon>
            <TaskIcon label="Camtasia">
                <rect width="24" height="24" fill="#53991a" />
                <path d="M18 6H8L6 8v8l2 2h10" stroke="#fff" strokeWidth="4" />
            </TaskIcon>
            <TaskIcon label="Skype" alert>
                <circle cx="10" cy="10" r="9" fill="#1592dc" />
                <circle cx="15" cy="15" r="7" fill="#1592dc" />
                <text x="11" y="17" textAnchor="middle" fontSize="16" fontWeight="bold" fill="#fff" fontFamily="Liberation Sans, sans-serif">S</text>
                <circle cx="18" cy="18" r="7" fill="#e03328" />
                <text x="18" y="22" textAnchor="middle" fontSize="11" fill="#fff" fontFamily="Liberation Sans, sans-serif">1</text>
            </TaskIcon>
            <TaskIcon label="Recorder">
                <rect width="24" height="24" rx="1" fill="#e9503a" />
                <path d="M18 6H8L6 8v8l2 2h10" stroke="#fff" strokeWidth="4" />
            </TaskIcon>
            <TaskIcon label="PicPick">
                <circle cx="13" cy="10" r="9" fill="#bfe4ee" stroke="#3e9fbe" strokeWidth="2" />
                <path d="M13 2l5 5M21 8l-4 6M17 17l-7 1M5 8l6-4" stroke="#3e9fbe" strokeWidth="2" />
                <path d="M4 23V10c0-4 9-4 9 1s-5 6-7 4" stroke="#ec7a35" strokeWidth="4" />
            </TaskIcon>
            <TaskIcon label="Notepad" running>
                <path d="M8 1l14 2 1 18-21-3z" fill="#a9d3d9" />
                <path d="M8 1l8 1-6 17-8-1z" fill="#6fa9b5" />
                <path d="M14 21l9-7v8z" fill="#eef6f8" />
            </TaskIcon>
            <TaskIcon label="Remote desktop" running>
                <path d="M2 2h20v15h-6v5H8v-5H2z" fill="#0f6fce" />
                <path d="M2 2h14v10H2z" fill="#1d97ee" />
                <path d="M8 12h8v10H8z" fill="#0a549f" />
            </TaskIcon>
            <TaskIcon label="Zoom" running>
                <circle cx="12" cy="12" r="12" fill="#0d55f0" />
                <text x="12" y="16" textAnchor="middle" fontSize="12" fontWeight="bold" fill="#fff" fontFamily="Open Sans, sans-serif">zm</text>
            </TaskIcon>
            <TaskIcon label="AIQ charts" running active>
                <rect width="24" height="24" fill="#fff" />
                <path d="M1 2h22M1 14h22" stroke="#777" strokeDasharray="2 1" />
                <path d="M2 8l4-2 3 5 2-4 4 0 5-4 2 0" stroke="#42208a" strokeWidth="2" />
                <AiqText />
            </TaskIcon>
            <TaskIcon label="PowerPoint" running>
                <circle cx="14" cy="12" r="10" fill="#e2684a" />
                <path d="M14 2a10 10 0 0 1 10 10H14z" fill="#f09a80" />
                <rect y="6" width="13" height="13" rx="1" fill="#c13b1b" />
                <text x="6" y="17" textAnchor="middle" fontSize="11" fontWeight="bold" fill="#fff" fontFamily="Open Sans, sans-serif">P</text>
            </TaskIcon>
            <TaskIcon label="AIQ matchmaker" running>
                <rect width="24" height="24" fill="#fff" />
                <path d="M1 14L12 1h10v9l-6 5-7-6-4 5z" fill="#ddd" stroke="#222" />
                <path d="M9 8l8 6M11 5l9 7M13 3l8 6M9 13l9-10M14 14l8-9" stroke="#4a48b0" />
                <AiqText />
            </TaskIcon>
        </div>
        <div className={`flex flex-col items-center pt-px pr-[3px] text-[11px] leading-[18px] text-white ${UI_FONT}`}>
            <span>9:09 AM</span>
            <span>12/14/2023</span>
        </div>
    </div>
);

export default function App() {
    return (
        <div className="flex h-screen min-h-[600px] w-full flex-col overflow-hidden bg-[#f0f0f0]">
            <WindowTitle />
            <Toolbars />
            <main className="flex min-h-0 flex-1 gap-[3px] pr-px pb-px">
                <div className="flex min-w-0 flex-1 flex-col border-t border-[#555] bg-[#a0a0a0] pr-px pl-[2px]">
                    <ChartWindow />
                </div>
                <Sidebar />
            </main>
            <StatusBar />
            <Taskbar />
        </div>
    );
}
